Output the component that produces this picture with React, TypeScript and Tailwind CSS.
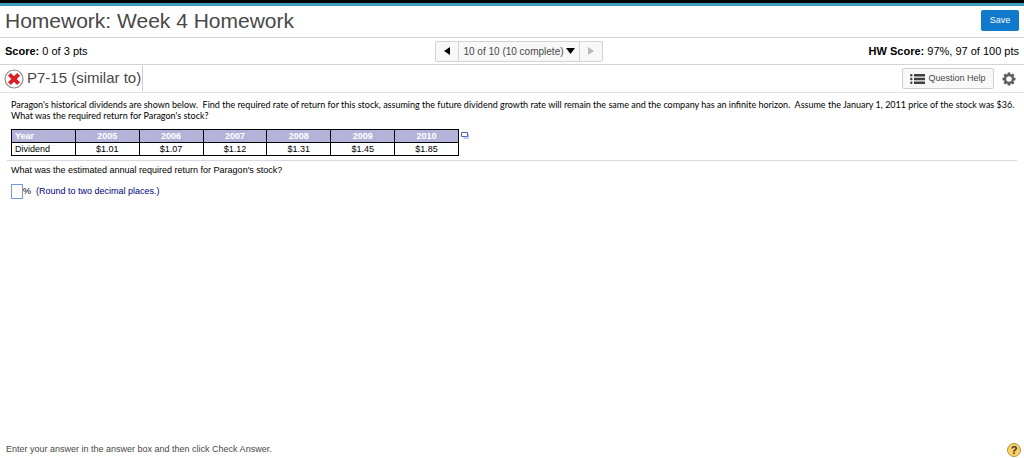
const dividends = [
  { year: "2005", amount: "$1.01" },
  { year: "2006", amount: "$1.07" },
  { year: "2007", amount: "$1.12" },
  { year: "2008", amount: "$1.31" },
  { year: "2009", amount: "$1.45" },
  { year: "2010", amount: "$1.85" },
];

function WrongMark() {
  return (
    <svg viewBox="0 0 20 20" className="size-5 shrink-0" role="img" aria-label="Incorrect">
      <circle cx="10" cy="10" r="9" fill="#fff" stroke="#8b8b8b" strokeWidth="1.2" />
      <path d="M5.4 5.4L14.6 14.6M14.6 5.4L5.4 14.6" stroke="#dc1f26" strokeWidth="4" />
    </svg>
  );
}

function ListIcon() {
  return (
    <svg viewBox="0 0 15 10" className="h-[10px] w-[15px] shrink-0" fill="#3f3f3f" aria-hidden="true">
      <path d="M4 0H15V2.6H4zM4 3.7H15V6.3H4zM4 7.4H15V10H4z" />
      <circle cx="1.3" cy="1.3" r="1.2" />
      <circle cx="1.3" cy="5" r="1.2" />
      <circle cx="1.3" cy="8.7" r="1.2" />
    </svg>
  );
}

function GearIcon() {
  const teeth = [0, 45, 90, 135, 180, 225, 270, 315];
  return (
    <svg viewBox="0 0 14 14" className="size-[14px]" aria-hidden="true">
      {teeth.map((angle) => (
        <path key={angle} d="M5.3 3L5.8 0.5H8.2L8.7 3z" fill="#5c5c5c" transform={`rotate(${angle} 7 7)`} />
      ))}
      <circle cx="7" cy="7" r="3.8" fill="none" stroke="#5c5c5c" strokeWidth="2" />
    </svg>
  );
}

function PopoutIcon() {
  return (
    <svg viewBox="0 0 9 8" className="h-2 w-[9px]" aria-hidden="true">
      <path d="M3 2.5H7.5V6.5H3z" fill="#dfe3f3" stroke="#b9c0de" />
      <path d="M0.5 0.5H6.5V4.5H0.5z" fill="#fff" stroke="#5567b4" />
    </svg>
  );
}

export default function App() {
  return (
    <div className="flex min-h-screen flex-col bg-white font-['Liberation_Sans',Arial,sans-serif] text-black">
      <header className="flex h-[38px] items-center justify-between border-b border-[#d2d4de] px-[5px] pt-1 shadow-[inset_0_3px_0_#000,inset_0_6px_0_#409cbf]">
        <h1 className="text-[21px] leading-6 text-[#484848]">Homework: Week 4 Homework</h1>
        <button type="button" className="h-[21px] w-[38px] rounded-[2px] bg-[#1179cb] text-[9px] text-white">
          Save
        </button>
      </header>

      <div className="grid h-[27px] grid-cols-[1fr_auto_1fr] items-center border-b border-[#d2d4de] px-[5px] text-[11px]">
        <div>
          <b>Score:</b> 0 of 3 pts
        </div>
        <nav className="ml-[14px] flex h-[21px] w-[168px] rounded-[2px] border border-[#d4d4d4] bg-[#f8f8f8] text-[10px] text-[#484848]">
          <button type="button" aria-label="Previous question" className="flex w-[23px] items-center justify-center border-r border-[#d4d4d4]">
            <svg viewBox="0 0 6 8" className="h-2 w-[6px]" fill="#000">
              <path d="M6 0V8L0 4z" />
            </svg>
          </button>
          <button type="button" className="flex flex-1 items-center justify-center gap-[2px] whitespace-nowrap">
            10 of 10 (10 complete)
            <svg viewBox="0 0 9 6" className="h-[6px] w-[9px]" fill="#000">
              <path d="M0 0H9L4.5 6z" />
            </svg>
          </button>
          <button type="button" aria-label="Next question" disabled className="flex w-[23px] items-center justify-center border-l border-[#d4d4d4]">
            <svg viewBox="0 0 6 8" className="h-2 w-[6px]">
              <path d="M0 0V8L6 4z" fill="#b9b9b9" />
            </svg>
          </button>
        </nav>
        <div className="text-right">
          <b>HW Score:</b> 97%, 97 of 100 pts
        </div>
      </div>

      <div className="flex h-7 items-center justify-between border-b border-[#dfe3e6] pr-2 pl-1">
        <div className="flex h-[25px] items-center gap-[3px] border-r border-[#cacbd8] pr-px">
          <WrongMark />
          <h2 className="text-[15px] text-[#484848]">P7-15 (similar to)</h2>
        </div>
        <div className="flex items-center gap-2">
          <button type="button" className="flex h-[21px] w-[92px] items-center justify-center gap-[3px] rounded-[2px] border border-[#cfcfcf] bg-[#f8f8f8] text-[9px] whitespace-nowrap text-[#484848]">
            <ListIcon />
            Question Help
          </button>
          <button type="button" aria-label="Settings">
            <GearIcon />
          </button>
        </div>
      </div>

      <main className="flex-1 pt-[6px] pr-[7px] pl-[7px] text-[9px] leading-[11px]">
        <p className="pl-1 font-[Lato,'Liberation_Sans',sans-serif]">
          Paragon's historical dividends are shown below.&nbsp; Find the required rate of return for this stock, assuming the future dividend growth rate will remain the same and the company has an infinite horizon.&nbsp; Assume the January 1, 2011 price of the stock was $36.
          <br />
          What was the required return for Paragon's stock?
        </p>

        <div className="mt-2 flex items-start gap-[2px] px-1 pb-1">
          <table className="w-[448px] table-fixed border-collapse border border-black text-center">
            <thead>
              <tr className="h-[13px] bg-[#b3b3d9] text-white">
                <th scope="col" className="border border-black px-[3px] text-left">Year</th>
                {dividends.map((d) => (
                  <th key={d.year} scope="col" className="border border-black">{d.year}</th>
                ))}
              </tr>
            </thead>
            <tbody>
              <tr className="h-[13px]">
                <th scope="row" className="border border-black px-[3px] text-left font-normal">Dividend</th>
                {dividends.map((d) => (
                  <td key={d.year} className="border border-black">{d.amount}</td>
                ))}
              </tr>
            </tbody>
          </table>
          <button type="button" aria-label="Open table in new window" className="mt-[3px]">
            <PopoutIcon />
          </button>
        </div>

        <div className="border-t border-[#d9d9e3] px-1 pt-1">
          <label htmlFor="answer" className="block">
            What was the estimated annual required return for Paragon's stock?
          </label>
          <div className="mt-2 flex items-center">
            <input id="answer" type="text" className="h-[15px] w-3 border border-[#6f9bdb] bg-white" />
            <span>%</span>
            <span className="ml-[5px] text-[#000080]">(Round to two decimal places.)</span>
          </div>
        </div>
      </main>

      <footer className="flex h-4 items-center justify-between pr-[3px] pl-[6px] text-[9px] text-[#484848]">
        <p>Enter your answer in the answer box and then click Check Answer.</p>
        <button type="button" aria-label="Help" className="size-[14px] rounded-full border border-[#b5914c] bg-[#fbd264] text-[11px] leading-3 font-bold text-[#333]">
          ?
        </button>
      </footer>
    </div>
  );
}
